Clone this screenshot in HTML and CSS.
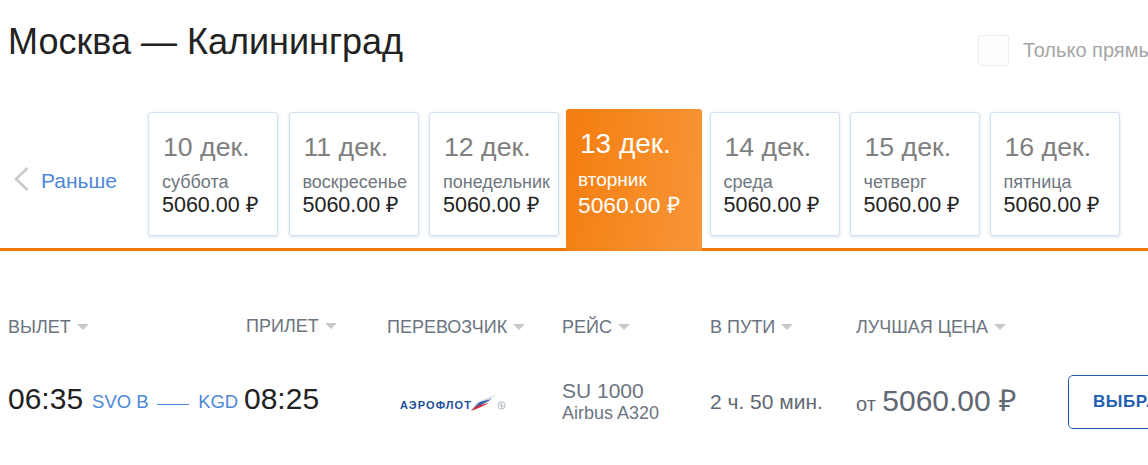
FILE: index.html
```html
<!DOCTYPE html>
<html lang="ru">
<head>
    <meta charset="UTF-8">
    <meta name="viewport" content="width=device-width, initial-scale=1.0">
    <title>Москва — Калининград</title>
    <link rel="stylesheet" href="styles.css">
</head>
<body>

<div class="page">
    <div class="top-row">
        <h1 class="route-title">Москва — Калининград</h1>
        <label class="direct-filter">
            <span class="direct-box"></span>
            <span class="direct-label">Только прямые</span>
        </label>
    </div>

    <div class="dates-row">
        <a class="earlier-link" href="#">
            <svg class="earlier-arrow" width="16" height="26" viewBox="0 0 16 26">
                <path d="M14.5 2 L3 13 L14.5 24" fill="none" stroke="#c9c9c9" stroke-width="2.6"/>
            </svg>
            <span class="earlier-text">Раньше</span>
        </a>

        <div class="date-cards">
            <div class="date-card">
                <div class="date-day">10 дек.</div>
                <div class="date-week">суббота</div>
                <div class="date-price">5060.00 ₽</div>
            </div>
            <div class="date-card">
                <div class="date-day">11 дек.</div>
                <div class="date-week">воскресенье</div>
                <div class="date-price">5060.00 ₽</div>
            </div>
            <div class="date-card">
                <div class="date-day">12 дек.</div>
                <div class="date-week">понедельник</div>
                <div class="date-price">5060.00 ₽</div>
            </div>
            <div class="date-card date-card-active">
                <div class="date-day">13 дек.</div>
                <div class="date-week">вторник</div>
                <div class="date-price">5060.00 ₽</div>
            </div>
            <div class="date-card">
                <div class="date-day">14 дек.</div>
                <div class="date-week">среда</div>
                <div class="date-price">5060.00 ₽</div>
            </div>
            <div class="date-card">
                <div class="date-day">15 дек.</div>
                <div class="date-week">четверг</div>
                <div class="date-price">5060.00 ₽</div>
            </div>
            <div class="date-card">
                <div class="date-day">16 дек.</div>
                <div class="date-week">пятница</div>
                <div class="date-price">5060.00 ₽</div>
            </div>
        </div>
    </div>

    <div class="table-head">
        <div class="col-depart sort-head">ВЫЛЕТ<i class="sort-caret"></i></div>
        <div class="col-arrive sort-head head-raised">ПРИЛЕТ<i class="sort-caret"></i></div>
        <div class="col-carrier sort-head">ПЕРЕВОЗЧИК<i class="sort-caret"></i></div>
        <div class="col-flight sort-head">РЕЙС<i class="sort-caret"></i></div>
        <div class="col-time sort-head">В ПУТИ<i class="sort-caret"></i></div>
        <div class="col-price sort-head">ЛУЧШАЯ ЦЕНА<i class="sort-caret"></i></div>
    </div>

    <div class="flight-row">
        <div class="col-depart depart-cell">
            <span class="clock">06:35</span>
            <span class="airport airport-from">SVO B</span>
            <span class="route-line"></span>
            <span class="airport">KGD</span>
        </div>
        <div class="col-arrive arrive-cell"><span class="clock">08:25</span></div>
        <div class="col-carrier carrier-logo">
            <span class="logo-name">АЭРОФЛОТ</span>
            <svg class="logo-wing" width="26" height="17" viewBox="0 0 26 17">
                <path d="M0 16.5 C8 12 18 6 25.5 0 C20 3 12 6 6 8.5 Z" fill="#c9d2de"/>
                <path d="M0 16.5 C6 12.5 13 9.5 21 5 L9 8 Z" fill="#2a5aa8"/>
                <path d="M0 17 C6 15 13 12 18.5 8.5 L5.5 12 Z" fill="#d8303a"/>
            </svg>
            <svg class="logo-globe" width="9" height="9" viewBox="0 0 9 9">
                <circle cx="4.5" cy="4.5" r="3.6" fill="none" stroke="#aab2bd" stroke-width="0.9"/>
                <path d="M2 3.5 L7 5.5 M4.5 2 V7" stroke="#aab2bd" stroke-width="0.8"/>
            </svg>
        </div>
        <div class="col-flight flight-cell">
            <div class="flight-no">SU 1000</div>
            <div class="flight-plane">Airbus A320</div>
        </div>
        <div class="col-time travel-time">2 ч. 50 мин.</div>
        <div class="col-price price-cell">
            <span class="price-from">от</span>
            <span class="price-big">5060.00 ₽</span>
        </div>
        <button class="select-button">ВЫБРАТЬ</button>
    </div>
</div>

</body>
</html>
```

FILE: styles.css
```css
html, body {
    margin: 0;
    padding: 0;
    height: 465px;
    overflow: hidden;
    background-color: #fff;
}

body {
    font-family: "Liberation Sans", Arial, sans-serif;
    color: #222;
}

.page {
    width: 1300px;
}

.top-row {
    display: flex;
    height: 109px;
    padding-left: 8px;
}

.route-title {
    margin: 21px 0 0;
    font-size: 36px;
    line-height: 42px;
    font-weight: 400;
    color: #222;
    width: 970px;
}

.direct-filter {
    display: flex;
    align-items: center;
    height: 34px;
    margin-top: 33px;
}

.direct-box {
    width: 31px;
    height: 31px;
    box-sizing: border-box;
    border: 1px solid #eee;
    border-radius: 2px;
    background-color: #fdfdfd;
    margin-right: 14px;
}

.direct-label {
    font-size: 20px;
    color: #a5a5a5;
    white-space: nowrap;
}

.dates-row {
    display: flex;
    height: 139px;
    border-bottom: 3px solid #f07800;
}

.earlier-link {
    display: flex;
    align-items: center;
    width: 148px;
    height: 142px;
    padding: 0 0 3px 13px;
    box-sizing: border-box;
    color: #4f87d9;
    font-size: 21px;
    text-decoration: none;
}

.earlier-arrow {
    margin-right: 12px;
}

.earlier-text {
    padding-top: 4px;
}

.date-cards {
    display: flex;
    align-items: flex-start;
}

.date-card {
    width: 130px;
    height: 124px;
    box-sizing: border-box;
    margin-top: 3px;
    margin-right: 10.5px;
    padding: 19px 0 0 13px;
    background-color: #fff;
    border: 1px solid #d3e2f1;
    border-radius: 3px;
    box-shadow: 0 1px 3px rgba(120, 150, 180, 0.3);
}

.date-card-active ~ .date-card {
    margin-right: 10px;
}

.date-day {
    font-size: 26.7px;
    line-height: 31px;
    color: #808080;
    padding-left: 1px;
}

.date-week {
    margin-top: 9px;
    font-size: 18px;
    line-height: 20px;
    color: #6f7780;
    white-space: nowrap;
}

.date-price {
    margin-top: 1px;
    font-size: 21.5px;
    line-height: 24px;
    color: #222;
    white-space: nowrap;
}

.date-card-active {
    position: relative;
    z-index: 1;
    width: 136px;
    height: 142px;
    margin: 0 7.5px 0 -3.5px;
    padding: 19px 0 0 12px;
    border: none;
    border-radius: 3px 3px 0 0;
    box-shadow: none;
    background: linear-gradient(100deg, #f47d0e, #f89639);
}

.date-card-active .date-day {
    color: #fff;
    font-size: 28px;
    padding-left: 2px;
}

.date-card-active .date-week,
.date-card-active .date-price {
    color: #fff;
}

.date-card-active .date-week {
    margin-top: 11px;
    font-size: 19px;
}

.date-card-active .date-price {
    margin-top: 3px;
    font-size: 22.8px;
}

.table-head {
    display: flex;
    align-items: center;
    height: 30px;
    margin-top: 61px;
    padding-left: 8px;
}

.sort-head {
    font-size: 18px;
    color: #6b7480;
    white-space: nowrap;
}

.head-raised {
    padding-bottom: 2px;
}

.sort-caret {
    display: inline-block;
    margin-left: 6px;
    vertical-align: 3px;
    border-left: 6px solid transparent;
    border-right: 6px solid transparent;
    border-top: 6px solid #c8c8c8;
}

.col-depart { width: 238px; }
.col-arrive { width: 141px; }
.col-carrier { width: 175px; }
.col-flight { width: 148px; }
.col-time { width: 146px; }
.col-price { width: 212px; }

.flight-row {
    display: flex;
    align-items: center;
    height: 60px;
    margin-top: 27px;
    padding-left: 8px;
}

.depart-cell {
    display: flex;
    align-items: center;
    white-space: nowrap;
}

.arrive-cell {
    margin-left: -2px;
    margin-right: 2px;
}

.clock {
    font-size: 30px;
    color: #222;
}

.airport {
    font-size: 18.5px;
    color: #4f87d9;
    padding-top: 6px;
}

.airport-from {
    margin-left: 9px;
}

.route-line {
    width: 32px;
    height: 1px;
    margin: 10px 9px 0 8.5px;
    background-color: #4f87d9;
}

.carrier-logo {
    display: flex;
    align-items: center;
    padding: 6px 0 0 13px;
    box-sizing: border-box;
}

.logo-name {
    font-size: 11px;
    font-weight: 700;
    color: #1c4f9c;
    letter-spacing: 1.1px;
    white-space: nowrap;
    padding-top: 6px;
}

.logo-wing {
    margin-left: -1px;
}

.logo-globe {
    margin: 7px 0 0 0;
}

.flight-cell {
    padding-top: 4px;
}

.flight-no {
    font-size: 21px;
    line-height: 25px;
    color: #6b7480;
}

.flight-plane {
    font-size: 18px;
    line-height: 21px;
    color: #6b7480;
}

.travel-time {
    font-size: 21px;
    padding-top: 5px;
    color: #5f6873;
    white-space: nowrap;
}

.price-cell {
    white-space: nowrap;
    color: #5f6873;
}

.price-from {
    font-size: 20px;
    margin-right: 2px;
}

.price-big {
    font-size: 30px;
}

.select-button {
    width: 160px;
    height: 54px;
    flex-shrink: 0;
    margin-top: 6px;
    padding: 0 0 0 24px;
    text-align: left;
    background-color: #fff;
    border: 1px solid #1f5fb0;
    border-radius: 5px;
    color: #1f5fb0;
    font-family: inherit;
    font-size: 17px;
    font-weight: 700;
    letter-spacing: 0.5px;
}
```
